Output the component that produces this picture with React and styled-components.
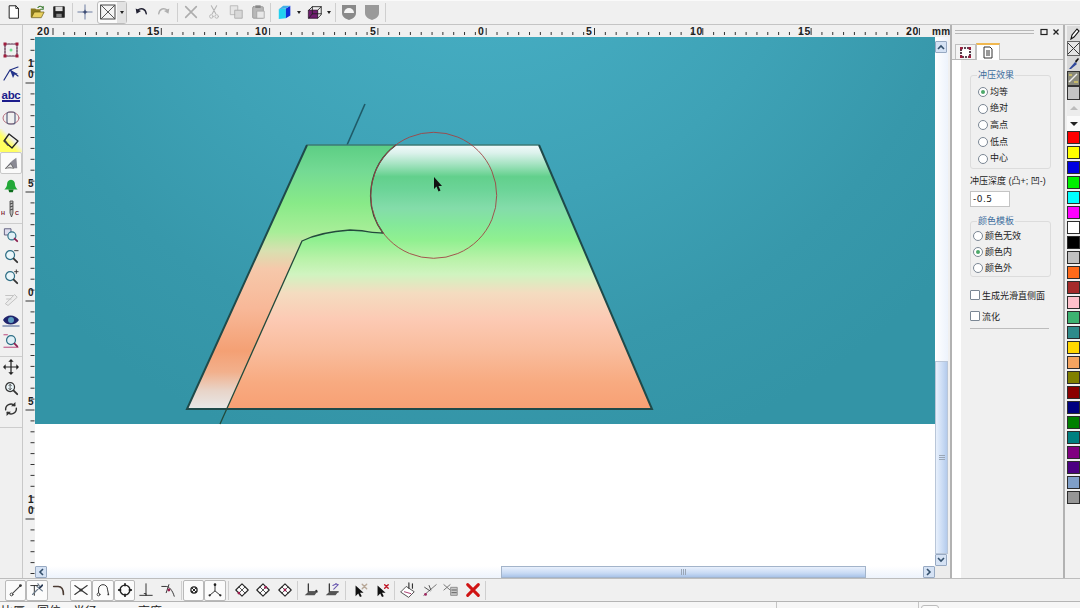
import React from 'react'
import styled, { createGlobalStyle } from 'styled-components'

const GlobalStyle = createGlobalStyle`
  html, body { margin: 0; padding: 0; background: #f0f0f0; }
  * { box-sizing: border-box; }
`

const CJK = `"Liberation Sans", "Noto Sans CJK SC", sans-serif`

const Frame = styled.div`
  display: flex;
  flex-direction: column;
  width: 1080px;
  height: 608px;
  overflow: hidden;
  background: #f0f0f0;
  font-family: ${CJK};
  color: #222;
`

const TopBar = styled.div`
  display: flex;
  align-items: center;
  height: 25px;
  padding: 0 0 1px 3px;
  border-top: 1px solid #fafafa;
  border-bottom: 1px solid #c4c4c4;
`

const BottomBar = styled.div`
  display: flex;
  align-items: center;
  height: 24px;
  padding-left: 5px;
  border-top: 1px solid #bdbdbd;
  border-bottom: 1px solid #b4b4b4;
`

const ToolBtn = styled.div`
  display: flex;
  flex: none;
  align-items: center;
  justify-content: center;
  width: ${({ $w }) => $w || 22}px;
  height: 21px;
  border-radius: 2px;
  ${({ $on }) => $on && `
    background: #fbfbfb;
    border: 1px solid #b9b9b9;
  `}
`

const Split = styled.div`
  flex: none;
  width: 1px;
  height: 19px;
  margin: 0 ${({ $m }) => $m ?? 2}px;
  background: #cfcfcf;
`

const Gap = styled.div`
  flex: none;
  width: ${({ $w }) => $w}px;
`

const DropBtn = styled.div`
  display: flex;
  flex: none;
  width: 30px;
  height: 23px;
  margin: 0 3px 0 1px;
  background: #fbfbfb;
  border: 1px solid #bcbcbc;
  border-radius: 3px;
`

const DropFace = styled.div`
  display: flex;
  flex: 1;
  align-items: center;
  justify-content: center;
`

const DropCaret = styled.div`
  display: flex;
  align-items: center;
  justify-content: center;
  width: 9px;
  background: #e2e2e2;
`

const Caret = styled.span`
  display: block;
  flex: none;
  width: 0;
  height: 0;
  border-left: 2.5px solid transparent;
  border-right: 2.5px solid transparent;
  border-top: 3px solid #222;
  margin-left: ${({ $m }) => $m || 0}px;
  margin-right: ${({ $r }) => $r || 0}px;
`

const Main = styled.div`
  display: flex;
  height: 553px;
`

const SideTools = styled.div`
  flex: none;
  width: 23px;
  padding-top: 13px;
  border-right: 1px solid #c8c8c8;
`

const SideGroup = styled.div`
  display: flex;
  flex-direction: column;
  width: 22px;
  padding-bottom: ${({ $pb }) => $pb || 0}px;
  border-bottom: 1px solid #cdcdcd;
`

const SideBtn = styled.div`
  display: flex;
  align-items: center;
  justify-content: center;
  height: ${({ $h }) => $h}px;
  ${({ $on }) => $on && `
    background: #fafafa;
    border: 1px solid #c8c8c8;
    border-radius: 2px;
  `}
  ${({ $hl }) => $hl && `
    background: linear-gradient(45deg, #ffff60 0 38%, transparent 58%);
  `}
`

const AbcMark = styled.span`
  font: bold 11.5px/10px "Liberation Sans", sans-serif;
  color: #1c1c8c;
  border-bottom: 2px solid #1c1c8c;
  letter-spacing: -0.3px;
`

const Workspace = styled.div`
  display: grid;
  flex: none;
  grid-template-columns: 12px 900px 13px 2px;
  grid-template-rows: 12px 529px 12px;
  width: 927px;
`

const RulerCorner = styled.div`
  background: #f0f0f0;
`

const TopRuler = styled.svg`
  grid-column: 2 / 5;
  display: block;
  width: 915px;
  height: 12px;
`

const SideRuler = styled.svg`
  display: block;
  width: 12px;
  height: 541px;
  grid-row: 2 / 4;
`

const Canvas = styled.svg`
  display: block;
  width: 900px;
  height: 529px;
  background: #fff;
`

const VTrack = styled.div`
  display: flex;
  flex-direction: column;
  background: linear-gradient(90deg, #ffffff, #edf3fc);
`

const VSpace = styled.div`
  flex: 1;
  display: flex;
  justify-content: flex-start;
  padding-top: 4px;
`

const VThumb = styled.div`
  display: flex;
  align-items: center;
  justify-content: center;
  height: 193px;
  background: linear-gradient(90deg, #e8f0fc, #c9dbf4 60%, #b4cbec);
  border: 1px solid #b9c6d8;
`

const Grip = styled.div`
  width: 6px;
  height: 6px;
  background: ${({ $v }) =>
    $v
      ? 'repeating-linear-gradient(180deg, #9aa6b6 0 1px, transparent 1px 2px)'
      : 'repeating-linear-gradient(90deg, #9aa6b6 0 1px, transparent 1px 2px)'};
`

const ArrowBtn = styled.div`
  display: flex;
  flex: none;
  align-items: center;
  justify-content: center;
  width: 12px;
  height: 12px;
  background: #d5e2f4;
  border: 1px solid #97a9c2;
  border-radius: 1px;
`

const HTrack = styled.div`
  display: flex;
  align-items: center;
  background: linear-gradient(180deg, #ffffff, #edf3fc);
`

const HSpace = styled.div`
  flex: 1;
  padding-left: 454px;
  padding-right: 57px;
`

const HThumb = styled.div`
  display: flex;
  align-items: center;
  justify-content: center;
  height: 12px;
  background: linear-gradient(180deg, #e8f0fc, #c9dbf4 60%, #a9c3e8);
  border: 1px solid #a3b4ca;
`

const ScrollCorner = styled.div`
  background: #ececec;
`

const Dock = styled.div`
  flex: none;
  display: flex;
  flex-direction: column;
  width: 115px;
  border-left: 2px solid #b2b2b2;
  border-right: 2px solid #b2b2b2;
`

const DockHead = styled.div`
  display: flex;
  align-items: center;
  gap: 3px;
  height: 18px;
  padding: 0 3px 4px 3px;
`

const DockGrip = styled.div`
  flex: 1;
  height: 4px;
  margin-right: 2px;
  border-top: 1px solid #b8b8b8;
  border-bottom: 1px solid #b8b8b8;
`

const DockBtn = styled.div`
  display: flex;
  align-items: center;
  justify-content: center;
  width: 9px;
  height: 9px;
`

const TabRow = styled.div`
  display: flex;
  align-items: flex-end;
  height: 17px;
  padding-left: 3px;
  border-bottom: 1px solid #b8b8b8;
`

const Tab = styled.div`
  display: flex;
  align-items: center;
  justify-content: center;
  width: ${({ $active }) => ($active ? 24 : 21)}px;
  height: ${({ $active }) => ($active ? 17 : 15)}px;
  margin-bottom: ${({ $active }) => ($active ? -1 : 0)}px;
  background: ${({ $active }) => ($active ? '#fff' : '#f4f4f4')};
  border: 1px solid #c0c0c0;
  border-bottom: none;
  border-top: ${({ $active }) => ($active ? '2px solid #f0b850' : '1px solid #c0c0c0')};
`

const DockBody = styled.div`
  display: flex;
  flex: 1;
`

const WhiteStrip = styled.div`
  width: 9px;
  background: #fff;
`

const Form = styled.div`
  flex: 1;
  padding: 15px 0 0 9px;
  background: #f0f0f0;
  font-size: 9px;
`

const Group = styled.div`
  position: relative;
  width: 81px;
  height: ${({ $h }) => $h}px;
  padding: ${({ $pt }) => $pt}px 0 0 ${({ $pl }) => $pl}px;
  margin-top: ${({ $mt }) => $mt || 0}px;
  border: 1px solid #dcdcdc;
  border-radius: 3px;
`

const Legend = styled.div`
  position: absolute;
  top: -6px;
  left: 6px;
  padding: 0 1px;
  background: #f0f0f0;
  color: #3c6c9c;
  line-height: 11px;
`

const RadioRow = styled.div`
  display: flex;
  align-items: center;
  gap: 2px;
  height: ${({ $h }) => $h}px;
  line-height: 11px;
`

const Radio = styled.span`
  display: flex;
  flex: none;
  align-items: center;
  justify-content: center;
  width: 10px;
  height: 10px;
  background: #fff;
  border: 1px solid #7b8794;
  border-radius: 50%;
  &::after {
    content: '';
    display: ${({ $on }) => ($on ? 'block' : 'none')};
    width: 4px;
    height: 4px;
    border-radius: 50%;
    background: #4da86a;
  }
`

const FieldLabel = styled.div`
  margin-top: 6px;
  line-height: 12px;
  white-space: nowrap;
`

const DepthInput = styled.div`
  width: 40px;
  height: 16px;
  margin-top: 4px;
  padding: 1px 0 0 2px;
  background: #fff;
  border: 1px solid #c4c4c4;
  font: 9px/12px "DejaVu Sans", sans-serif;
  letter-spacing: 0.5px;
`

const CheckRow = styled.div`
  display: flex;
  align-items: center;
  gap: 2px;
  height: 12px;
  margin-top: ${({ $mt }) => $mt}px;
  white-space: nowrap;
`

const Check = styled.span`
  flex: none;
  width: 10px;
  height: 10px;
  background: #fff;
  border: 1px solid #7b8794;
  border-radius: 1px;
`

const Rule = styled.div`
  width: 79px;
  height: 1px;
  margin-top: 6px;
  background: #bcbcbc;
`

const Palette = styled.div`
  flex: none;
  display: flex;
  flex-direction: column;
  align-items: flex-start;
  width: 15px;
  padding: 1px 0 0 2px;
`

const PalBtn = styled.div`
  display: flex;
  align-items: center;
  justify-content: center;
  width: 13px;
  height: ${({ $h }) => $h || 15}px;
  background: ${({ $bg }) => $bg || 'transparent'};
  border: ${({ $bd }) => ($bd ? `1px solid ${$bd}` : 'none')};
`

const Swatch = styled.div`
  flex: none;
  width: 13px;
  height: 13px;
  margin-bottom: 2px;
  background: ${({ $c }) => $c};
  border: 1px solid #2c2c2c;
`

const Status = styled.div`
  display: flex;
  flex: 1;
  overflow: hidden;
  padding-left: 1px;
  background: #f6f6f6;
  font-size: 12px;
  line-height: 14px;
`

const StatusCell = styled.span`
  flex: none;
  width: ${({ $w }) => $w}px;
  padding-top: 3px;
`

const StatusDivide = styled.span`
  flex: none;
  width: 1px;
  background: #c4c4c4;
`

const StatusBtn = styled.span`
  flex: none;
  width: 18px;
  height: 12px;
  margin: 3px 0 0 2px;
  border: 1px solid #bcbcbc;
  border-radius: 3px;
  background: #fbfbfb;
`

const Svg = ({ s = 16, v = 18, children }) => (
  <svg width={s} height={s} viewBox={`0 0 ${v} ${v}`} fill="none" strokeLinecap="round" strokeLinejoin="round">
    {children}
  </svg>
)

const Cross = ({ x, y, r = 2, c = '#222', w = 1 }) => (
  <path d={`M${x - r} ${y - r}l${r * 2} ${r * 2}M${x + r} ${y - r}l${-r * 2} ${r * 2}`} stroke={c} strokeWidth={w} />
)

const Lens = ({ c = '#2e6f86', extra }) => (
  <Svg>
    <circle cx="8" cy="8" r="5" stroke={c} strokeWidth="1.4" fill="#eaf6fa" />
    <path d="M12 12l4 4" stroke="#333" strokeWidth="2" />
    {extra}
  </Svg>
)

const Diamond = ({ dot }) => (
  <Svg>
    <path d="M9 2l7 7-7 7-7-7z" stroke="#222" strokeWidth="1.2" fill="#fff" />
    <path d="M5.500 5.500l7 7M12.500 5.500l-7 7" stroke="#444" strokeWidth="1" />
    <circle cx={dot[0]} cy={dot[1]} r="1.6" fill="#9c2050" />
  </Svg>
)

const Plate = ({ tint }) => (
  <Svg>
    <path d="M6 2v9l10 0" stroke="#333" strokeWidth="1.4" />
    <path d="M2 15l4-4h10l-3 4z" fill="#555" />
    {tint && <path d="M10 4l4-2M11 8l5-5M13 2l3 1" stroke={tint} strokeWidth="1.2" />}
    {!tint && <circle cx="15" cy="10" r="1.2" fill="#333" />}
  </Svg>
)

const ArrowMark = ({ c, size = 2.5 }) => (
  <Svg>
    <path d="M4 4v12l3-3 2 4 2-1-2-4h4z" fill="#111" />
    <Cross x={14} y={5} r={size} c={c} w={1.6} />
  </Svg>
)

const topIcons = {
  file: (
    <Svg>
      <path d="M4 2h7l3 3v11H4z" fill="#fff" stroke="#222" strokeWidth="1.1" />
      <path d="M11 2v3h3" stroke="#222" />
    </Svg>
  ),
  open: (
    <Svg>
      <path d="M2 5h5l1 1h5v9H2z" fill="#8a7a20" />
      <path d="M3 15l3-6h11l-3 6z" fill="#e8d060" stroke="#6a5a10" strokeWidth=".8" />
      <path d="M10 4c2-2 4-2 5 0l1-1v3h-3" stroke="#3a7a30" strokeWidth="1.2" />
    </Svg>
  ),
  save: (
    <Svg>
      <rect x="2.500" y="2.500" width="13" height="13" rx="1" fill="#222" />
      <rect x="5" y="3" width="8" height="5" fill="#ddd" />
      <rect x="6" y="11" width="6" height="4" fill="#888" />
    </Svg>
  ),
  cross: (
    <Svg>
      <path d="M9 1v16M1 9h16" stroke="#5a6c96" strokeWidth="1" />
      <path d="M7 9h4M9 7v4" stroke="#20305a" strokeWidth="1" />
    </Svg>
  ),
  boxX: (
    <Svg s={18}>
      <rect x="2" y="2" width="14" height="14" stroke="#444" strokeWidth="1" fill="#f4f4f4" />
      <path d="M2 2l14 14M16 2L2 16" stroke="#555" strokeWidth="1" />
    </Svg>
  ),
  undo: (
    <Svg>
      <path d="M5 7c4-3 9-2 10 4" stroke="#223" strokeWidth="1.5" />
      <path d="M3 5l1 6 5-3z" fill="#223" />
    </Svg>
  ),
  redo: (
    <Svg>
      <path d="M13 7c-4-3-9-2-10 4" stroke="#b0b0b0" strokeWidth="1.5" />
      <path d="M15 5l-1 6-5-3z" fill="#b0b0b0" />
    </Svg>
  ),
  del: (
    <Svg>
      <path d="M3 3l12 12M15 3L3 15" stroke="#adadad" strokeWidth="1.8" />
    </Svg>
  ),
  cut: (
    <Svg>
      <path d="M6 2l5 9M12 2l-5 9" stroke="#b4b4b4" strokeWidth="1.2" />
      <circle cx="6" cy="14" r="2" stroke="#b4b4b4" />
      <circle cx="12" cy="14" r="2" stroke="#b4b4b4" />
    </Svg>
  ),
  copy: (
    <Svg>
      <rect x="3" y="2" width="8" height="10" fill="#e6e6e6" stroke="#b4b4b4" />
      <rect x="8" y="7" width="8" height="9" fill="#d8d8d8" stroke="#aaa" />
    </Svg>
  ),
  paste: (
    <Svg>
      <rect x="3" y="3" width="12" height="13" rx="1" fill="#b8b8b8" stroke="#999" />
      <rect x="6" y="1.500" width="6" height="3" fill="#888" />
      <rect x="8" y="8" width="8" height="8" fill="#e8e8e8" stroke="#aaa" />
    </Svg>
  ),
  cube: (
    <Svg>
      <path d="M2 6l8-1v11l-8 1z" fill="#22d0f0" />
      <path d="M10 5l5-3v11l-5 3z" fill="#1030d8" />
      <path d="M2 6l5-4h8l-5 3z" fill="#40b0e8" />
    </Svg>
  ),
  wire: (
    <Svg>
      <path d="M2 7h10v9H2z" fill="#701c70" stroke="#301030" />
      <path d="M2 7l4-4h10v9l-4 4M12 7l4-4M6 3v8M2 16l4-5h10" stroke="#222" strokeWidth="1" />
    </Svg>
  ),
  shieldA: (
    <Svg s={18}>
      <path d="M2 2h14v8c0 4-4 6-7 7-3-1-7-3-7-7z" fill="#8a8a8a" />
      <path d="M4 10a5 5 0 0 1 10 0z" fill="#f4f4f4" />
    </Svg>
  ),
  shieldB: (
    <Svg s={18}>
      <path d="M2 2h14v8c0 4-4 6-7 7-3-1-7-3-7-7z" fill="#9a9a9a" />
    </Svg>
  ),
}

const sideA = [
  {
    h: 24,
    el: (
      <Svg s={18}>
        <rect x="3" y="3" width="12" height="12" stroke="#502040" strokeWidth="1.2" strokeDasharray="2 1" />
        <path d="M1.500 1.500h3v3h-3zM13.500 1.500h3v3h-3zM1.500 13.500h3v3h-3zM13.500 13.500h3v3h-3z" fill="#a01c3c" />
        <circle cx="9" cy="9" r="1.5" fill="#70e090" />
      </Svg>
    ),
  },
  {
    h: 22,
    el: (
      <Svg s={18}>
        <path d="M2 16L8 6l8-3M8 6l8 6" stroke="#1c2c80" strokeWidth="1.2" />
        <path d="M8 6l3 8 2-4 3 0z" fill="#24348c" />
      </Svg>
    ),
  },
  { h: 23, el: <AbcMark>abc</AbcMark> },
  {
    h: 22,
    el: (
      <Svg s={18}>
        <ellipse cx="9" cy="9" rx="8" ry="6" stroke="#b87080" strokeWidth="1" />
        <rect x="5" y="3" width="8" height="12" rx="2" stroke="#5c6480" strokeWidth="1.2" />
      </Svg>
    ),
  },
  {
    h: 23,
    hl: true,
    el: (
      <Svg s={18}>
        <path d="M7 2l9 7-6 7-8-7z" stroke="#222" strokeWidth="1.3" />
        <path d="M3 9l3 4" stroke="#444" strokeWidth="2" />
      </Svg>
    ),
  },
  {
    h: 22,
    on: true,
    el: (
      <Svg>
        <path d="M3 15c3-5 7-9 12-12l1 12z" fill="#8a8a94" />
        <path d="M3 15c3-1 6-1 9 0l-3-5z" fill="#e8e8e8" stroke="#555" strokeWidth=".8" />
      </Svg>
    ),
  },
  {
    h: 23,
    el: (
      <Svg s={16}>
        <path d="M9 2c3 0 4.500 2.500 4.500 5.500 0 2 1.500 3.500 3 5.500h-15c1.500-2 3-3.500 3-5.500C4.500 4.500 6 2 9 2z" fill="#22a838" />
        <path d="M6 13h6l-1 3H7z" fill="#0c6c1c" />
      </Svg>
    ),
  },
  {
    h: 23,
    el: (
      <svg width="20" height="20" viewBox="0 0 20 20">
        <path d="M9 2h3v12l-1.500 4L9 14z" fill="#b8b8b8" stroke="#444" strokeWidth=".8" />
        <path d="M9 5l3-1M9 8l3-1M9 11l3-1" stroke="#333" strokeWidth=".8" />
        <text x="0" y="16" fontSize="5.500" fontWeight="700" fill="#7c2030" fontFamily="Liberation Sans">H</text>
        <text x="14" y="16" fontSize="5.500" fontWeight="700" fill="#7c2030" fontFamily="Liberation Sans">C</text>
      </svg>
    ),
  },
]

const sideB = [
  {
    el: (
      <Svg>
        <rect x="2" y="2" width="7" height="7" fill="#dde" stroke="#557" />
        <circle cx="10" cy="10" r="4.500" fill="#dff0f6" stroke="#2e6f86" strokeWidth="1.3" />
        <path d="M13 13l3 3" stroke="#8c2050" strokeWidth="2" />
      </Svg>
    ),
  },
  { el: <Lens extra={<path d="M13 3h4" stroke="#333" />} /> },
  { el: <Lens extra={<path d="M15 1v4M13 3h4" stroke="#333" />} /> },
  {
    el: (
      <Svg>
        <path d="M3 14l10-10 3 3-10 9z" fill="#ececec" stroke="#bcbcbc" />
        <path d="M3 5h8M4 9h5" stroke="#c4c4c4" strokeWidth="1.2" />
      </Svg>
    ),
  },
  {
    el: (
      <Svg s={18}>
        <path d="M1 9c3-6 12-6 16 0-4 6-13 6-16 0z" fill="#20246c" />
        <circle cx="9" cy="9" r="3" fill="#5c9cc0" />
        <path d="M1 15h16" stroke="#7c8cb0" strokeWidth="1.5" />
      </Svg>
    ),
  },
  {
    el: (
      <Svg>
        <path d="M1 16h16M1 2h4" stroke="#b0306c" strokeWidth="1" />
        <circle cx="9" cy="8" r="5" stroke="#2e6f86" strokeWidth="1.4" fill="#dff0f6" />
        <path d="M13 12l3 3" stroke="#8c2050" strokeWidth="2" />
      </Svg>
    ),
  },
]

const sideC = [
  {
    el: (
      <Svg>
        <path d="M9 2v14M2 9h14" stroke="#222" strokeWidth="1.4" />
        <path d="M9 0l3 3H6zM9 18l3-3H6zM0 9l3-3v6zM18 9l-3-3v6z" fill="#222" />
      </Svg>
    ),
  },
  { el: <Lens c="#333" extra={<path d="M8 5v6M6.500 6.500L8 5l1.500 1.500M6.500 9.500L8 11l1.500-1.500" stroke="#333" strokeWidth=".8" />} /> },
  {
    el: (
      <Svg>
        <path d="M3 10a6 6 0 0 1 10-5" stroke="#333" strokeWidth="1.6" />
        <path d="M15 8a6 6 0 0 1-10 5" stroke="#333" strokeWidth="1.6" />
        <path d="M14 1v5H9zM4 17v-5h5z" fill="#333" />
      </Svg>
    ),
  },
]

const bottomItems = [
  {
    w: 21,
    on: true,
    el: (
      <Svg>
        <path d="M4 14L14 4" stroke="#444" strokeWidth="1.2" />
        <circle cx="4" cy="14" r="1.6" stroke="#333" fill="#fff" />
        <circle cx="14" cy="4" r="1.6" fill="#333" />
      </Svg>
    ),
  },
  {
    w: 22,
    on: true,
    el: (
      <Svg>
        <path d="M2 4h8M6 4v11" stroke="#333" strokeWidth="1.1" />
        <path d="M4 14L15 3M9 5l6 5M10 2l2 3" stroke="#6c7c8c" strokeWidth="1.4" />
        <path d="M12 7l3-3" stroke="#20304c" strokeWidth="1.6" />
      </Svg>
    ),
  },
  {
    w: 21,
    el: (
      <Svg>
        <path d="M3 5h5c4 0 6 3 6 9" stroke="#4c3c34" strokeWidth="1.8" />
      </Svg>
    ),
  },
  { gap: 1 },
  {
    w: 22,
    on: true,
    el: (
      <Svg>
        <path d="M2 4l14 10M2 14L16 4" stroke="#333" strokeWidth="1.2" />
        <circle cx="9" cy="9" r="1.8" fill="#333" />
      </Svg>
    ),
  },
  {
    w: 22,
    on: true,
    el: (
      <Svg>
        <path d="M4 13V8a5 5 0 0 1 10 0l1 5" stroke="#333" strokeWidth="1.1" />
        <circle cx="4" cy="14" r="1.6" stroke="#333" fill="#fff" />
        <circle cx="15" cy="14" r="1" fill="#333" />
      </Svg>
    ),
  },
  {
    w: 21,
    on: true,
    el: (
      <Svg>
        <circle cx="9" cy="9" r="5.500" stroke="#222" strokeWidth="1.6" />
        <path d="M9 2v2M9 14v2M2 9h2M14 9h2" stroke="#222" strokeWidth="2" />
      </Svg>
    ),
  },
  {
    w: 21,
    el: (
      <Svg>
        <path d="M9 2v13M2 15h14" stroke="#333" strokeWidth="1.1" />
        <path d="M7 13h2v2" stroke="#333" strokeWidth="1" />
      </Svg>
    ),
  },
  {
    w: 24,
    el: (
      <Svg>
        <path d="M2 5h5c3 0 7 4 9 11" stroke="#333" strokeWidth="1.1" />
        <path d="M10 3L7 12" stroke="#333" strokeWidth="1.1" />
        <circle cx="10" cy="9" r="1.6" fill="#9c2050" />
      </Svg>
    ),
  },
  { sep: 1 },
  {
    w: 21,
    on: true,
    el: (
      <Svg>
        <circle cx="9" cy="9" r="3.500" stroke="#222" strokeWidth="1.4" />
        <Cross x={9} y={9} r={2} w={1.1} />
      </Svg>
    ),
  },
  {
    w: 22,
    on: true,
    el: (
      <Svg>
        <path d="M9 3v7L3 15M9 10l6 5" stroke="#333" strokeWidth="1.1" />
        <circle cx="9" cy="3" r="1.5" fill="#222" />
        <circle cx="3" cy="15" r="1.3" fill="#222" />
        <circle cx="15" cy="15" r="1.3" fill="#222" />
      </Svg>
    ),
  },
  { sep: 2 },
  { w: 21, el: <Diamond dot={[5.5, 12.5]} /> },
  { w: 22, el: <Diamond dot={[12, 6]} /> },
  { w: 22, el: <Diamond dot={[9, 9]} /> },
  { sep: 1 },
  { gap: 1 },
  { w: 22, el: <Plate /> },
  { w: 20, el: <Plate tint="#6a58b0" /> },
  { sep: 3 },
  { w: 22, el: <ArrowMark c="#b8a898" /> },
  { w: 21, el: <ArrowMark c="#c01828" size={2} /> },
  { sep: 2 },
  {
    w: 22,
    el: (
      <Svg>
        <path d="M1 11l6-6 9 6-6 6z" stroke="#444" fill="#fff" />
        <path d="M5 11l7 2" stroke="#a02860" />
        <path d="M10 1v6M14 2v5" stroke="#333" strokeWidth="1.3" />
      </Svg>
    ),
  },
  {
    w: 21,
    el: (
      <Svg>
        <path d="M2 15l14-12" stroke="#777" strokeWidth="1.1" />
        <path d="M3 6l6 4M8 4l2 5" stroke="#444" />
        <circle cx="4" cy="14" r="1.6" fill="#a02860" />
      </Svg>
    ),
  },
  {
    w: 22,
    el: (
      <Svg>
        <path d="M1 3l7 6M8 3L1 9" stroke="#777" strokeWidth="1.1" />
        <rect x="9" y="6" width="7" height="9" fill="#c8c8c8" stroke="#888" />
        <path d="M10 9h5M10 12h5" stroke="#555" />
      </Svg>
    ),
  },
  {
    w: 22,
    el: (
      <Svg>
        <path d="M3 3l12 12M15 3L3 15" stroke="#d01414" strokeWidth="3.4" />
      </Svg>
    ),
  },
  { sep: 1 },
]

const swatches = [
  '#ff0000', '#ffff00', '#0000e0', '#00f000', '#00ffff', '#ff00ff', '#ffffff', '#000000', '#c0c0c0',
  '#ff6a1a', '#a52a2a', '#ffc0cb', '#3cb371', '#2e8b8b', '#ffd700', '#f4a460', '#808000', '#8b0000',
  '#000080', '#008000', '#008080', '#800080', '#4b0082', '#7f9fc8', '#969696',
]

const topLabels = [
  [36, '20'], [146, '15'], [254, '10'], [369, '5'], [477, '0'],
  [585, '5'], [689, '10'], [797, '15'], [905, '20'],
]

const leftMajors = [
  [83, ['1', '0']], [192, ['5']], [301, ['0']], [410, ['5']], [519, ['1', '0']],
]

const RulerTop = () => {
  const ticks = []
  for (let i = 0; i < 81; i++) {
    const x = 53 - 35 + i * 10.83
    ticks.push(<path key={i} d={`M${x} ${i % 10 === 0 ? 3 : 7}V10`} stroke="#333" strokeWidth="1" />)
  }
  return (
    <TopRuler viewBox="0 0 915 12">
      {ticks}
      {topLabels.map(([x, t]) => (
        <text key={x} x={x - 35 + 1} y="10" fontSize="10.500" fontWeight="700" letterSpacing="0.6" fill="#222" fontFamily="Liberation Sans">
          {t}
        </text>
      ))}
      <text x="897" y="10" fontSize="10" fontWeight="700" letterSpacing="0.4" fill="#222" fontFamily="Liberation Sans">mm</text>
    </TopRuler>
  )
}

const RulerLeft = () => {
  const ticks = []
  for (let i = 0; i < 50; i++) {
    const y = 83 - 37 - 10.9 * 4 + i * 10.9
    ticks.push(<path key={i} d={`M${(i - 4) % 10 === 0 ? 2 : 7}.5 ${y}H11.5`} stroke="#333" strokeWidth="1" />)
  }
  return (
    <SideRuler viewBox="0 0 12 541">
      {ticks}
      {leftMajors.map(([y, chars]) =>
        chars.map((c, i) => (
          <text key={`${y}${i}`} x="5" y={y - 37 - 5 - (chars.length - 1 - i) * 11} fontSize="10" fontWeight="700" fill="#222" fontFamily="Liberation Sans">
            {c}
          </text>
        )),
      )}
    </SideRuler>
  )
}

const mainStops = [
  [0, '#f2fafa'], [0.03, '#dcf2ec'], [0.07, '#a8e4c4'], [0.12, '#62d08c'], [0.17, '#6cd498'], [0.24, '#84dcaa'],
  [0.3, '#84e89a'], [0.36, '#90f090'], [0.43, '#b8f2a8'], [0.49, '#d0f4c0'], [0.56, '#f4dcc0'],
  [0.66, '#fccab4'], [0.78, '#f9bc9c'], [0.9, '#f8aa80'], [1, '#f8a074'],
]

const leftStops = [
  [0, '#5cce84'], [0.1, '#74da94'], [0.22, '#88ea88'], [0.33, '#a8ee98'], [0.4, '#d8e0b0'], [0.47, '#f6c8aa'],
  [0.62, '#f8b898'], [0.78, '#f4a074'], [0.86, '#f2b08c'], [0.93, '#e8d4c8'], [1, '#e8e8e8'],
]

// left part of the sheet, bounded by the punch circle and the offset curve
const CUT_EDGE = 'A63 63 0 0 0 383 233C372 233 362 230 350 230C335 231 318 233 302 241'

const Drawing = () => (
  <Canvas viewBox="35 37 900 529">
    <defs>
      <radialGradient id="sea" gradientUnits="userSpaceOnUse" cx="480" cy="-140" r="620">
        <stop offset="0.28" stopColor="#44abc0" />
        <stop offset="0.55" stopColor="#3ea2b6" />
        <stop offset="0.8" stopColor="#3798ab" />
        <stop offset="1" stopColor="#3394a6" />
      </radialGradient>
      <linearGradient id="mainFill" gradientUnits="userSpaceOnUse" x1="0" y1="145" x2="0" y2="409">
        {mainStops.map(([o, c]) => <stop key={o} offset={o} stopColor={c} />)}
      </linearGradient>
      <linearGradient id="leftFill" gradientUnits="userSpaceOnUse" x1="0" y1="145" x2="0" y2="409">
        {leftStops.map(([o, c]) => <stop key={o} offset={o} stopColor={c} />)}
      </linearGradient>
    </defs>
    <rect x="35" y="37" width="900" height="387" fill="url(#sea)" />
    <path d="M347 145L365 104" stroke="#1f5a68" strokeWidth="1.6" />
    <path d="M307 145H539L652 409H187z" fill="url(#mainFill)" />
    <path d={`M307 145H396${CUT_EDGE}L226.700 409H187z`} fill="url(#leftFill)" />
    <path d="M307 145H539" stroke="#3c7a74" strokeWidth="1.4" />
    <path d="M539 145L652 409H187L307 145" stroke="#1f4a4a" strokeWidth="2" fill="none" />
    <path d={`M396 145${CUT_EDGE}L220 424`} stroke="#234a3c" strokeWidth="1.3" fill="none" />
    <circle cx="433.700" cy="195.300" r="63" stroke="#a04444" strokeWidth="0.9" fill="none" />
    <path d="M434 177v12l2.500-2.500 2 5 2-1-2-4.500h3.500z" fill="#111" />
  </Canvas>
)

export default function App() {
  return (
    <Frame>
      <GlobalStyle />
      <TopBar>
        <ToolBtn>{topIcons.file}</ToolBtn>
        <ToolBtn $w={23}>{topIcons.open}</ToolBtn>
        <ToolBtn>{topIcons.save}</ToolBtn>
        <Split $m={1.5} />
        <ToolBtn>{topIcons.cross}</ToolBtn>
        <DropBtn>
          <DropFace>{topIcons.boxX}</DropFace>
          <DropCaret><Caret /></DropCaret>
        </DropBtn>
        <ToolBtn>{topIcons.undo}</ToolBtn>
        <ToolBtn $w={23}>{topIcons.redo}</ToolBtn>
        <Split $m={2} />
        <ToolBtn>{topIcons.del}</ToolBtn>
        <ToolBtn $w={23}>{topIcons.cut}</ToolBtn>
        <ToolBtn>{topIcons.copy}</ToolBtn>
        <ToolBtn>{topIcons.paste}</ToolBtn>
        <Split $m={1} />
        <Gap $w={3} />
        <ToolBtn $w={20}>{topIcons.cube}</ToolBtn>
        <Caret $m={2} $r={3} />
        <ToolBtn $w={22}>{topIcons.wire}</ToolBtn>
        <Caret $m={1} $r={2} />
        <Split $m={2} />
        <ToolBtn $w={22}>{topIcons.shieldA}</ToolBtn>
        <ToolBtn $w={24}>{topIcons.shieldB}</ToolBtn>
        <Split $m={1} />
      </TopBar>

      <Main>
        <SideTools>
          <SideGroup $pb={3}>
            {sideA.map((b, i) => (
              <SideBtn key={i} $h={b.h} $on={b.on} $hl={b.hl}>{b.el}</SideBtn>
            ))}
          </SideGroup>
          <SideGroup $pb={4}>
            {sideB.map((b, i) => (
              <SideBtn key={i} $h={21.3}>{b.el}</SideBtn>
            ))}
          </SideGroup>
          <SideGroup $pb={7}>
            {sideC.map((b, i) => (
              <SideBtn key={i} $h={21}>{b.el}</SideBtn>
            ))}
          </SideGroup>
        </SideTools>

        <Workspace>
          <RulerCorner />
          <RulerTop />
          <RulerLeft />
          <Drawing />
          <VTrack>
            <VSpace>
              <ArrowBtn>
                <svg width="8" height="8" viewBox="0 0 8 8"><path d="M1 6l3-3 3 3" stroke="#34506c" strokeWidth="1.6" fill="none" /></svg>
              </ArrowBtn>
            </VSpace>
            <VThumb><Grip $v /></VThumb>
            <ArrowBtn>
              <svg width="8" height="8" viewBox="0 0 8 8"><path d="M1 2l3 3 3-3" stroke="#34506c" strokeWidth="1.6" fill="none" /></svg>
            </ArrowBtn>
          </VTrack>
          <div />
          <HTrack>
            <ArrowBtn>
              <svg width="8" height="8" viewBox="0 0 8 8"><path d="M6 1L3 4l3 3" stroke="#34506c" strokeWidth="1.6" fill="none" /></svg>
            </ArrowBtn>
            <HSpace>
              <HThumb><Grip /></HThumb>
            </HSpace>
            <ArrowBtn>
              <svg width="8" height="8" viewBox="0 0 8 8"><path d="M2 1l3 3-3 3" stroke="#34506c" strokeWidth="1.6" fill="none" /></svg>
            </ArrowBtn>
          </HTrack>
          <ScrollCorner />
          <ScrollCorner />
        </Workspace>

        <Dock>
          <DockHead>
            <DockGrip />
            <DockBtn>
              <svg width="8" height="8" viewBox="0 0 8 8"><rect x="1" y="1.500" width="6" height="5" stroke="#222" strokeWidth="1.2" fill="none" /></svg>
            </DockBtn>
            <DockBtn>
              <svg width="8" height="8" viewBox="0 0 8 8"><path d="M1.500 1.500l5 5M6.500 1.500l-5 5" stroke="#222" strokeWidth="1.3" /></svg>
            </DockBtn>
          </DockHead>
          <TabRow>
            <Tab>
              <svg width="13" height="13" viewBox="0 0 13 13">
                <rect x="2" y="2" width="9" height="9" stroke="#2a1020" strokeWidth="1.6" fill="#fff" strokeDasharray="2 1" />
                <path d="M1 1h2.500v2.500H1zM9.500 1H12v2.500H9.500zM1 9.500h2.500V12H1zM9.500 9.500H12V12H9.500z" fill="#a01c3c" />
              </svg>
            </Tab>
            <Tab $active>
              <svg width="12" height="13" viewBox="0 0 12 13">
                <path d="M2 1h6l2 2v9H2z" stroke="#333" fill="#fff" />
                <path d="M4 5h4M4 7h4M4 9h4" stroke="#333" />
              </svg>
            </Tab>
          </TabRow>
          <DockBody>
            <WhiteStrip />
            <Form>
              <Group $h={94} $pl={7} $pt={8}>
                <Legend>冲压效果</Legend>
                {['均等', '绝对', '高点', '低点', '中心'].map((t, i) => (
                  <RadioRow key={t} $h={16.6}>
                    <Radio $on={i === 0} />
                    {t}
                  </RadioRow>
                ))}
              </Group>
              <FieldLabel>冲压深度 (凸+; 凹-)</FieldLabel>
              <DepthInput>-0.5</DepthInput>
              <Group $h={56} $pl={2} $pt={6} $mt={14}>
                <Legend>颜色模板</Legend>
                {['颜色无效', '颜色内', '颜色外'].map((t, i) => (
                  <RadioRow key={t} $h={16}>
                    <Radio $on={i === 1} />
                    {t}
                  </RadioRow>
                ))}
              </Group>
              <CheckRow $mt={12}><Check />生成光滑直侧面</CheckRow>
              <CheckRow $mt={9}><Check />流化</CheckRow>
              <Rule />
            </Form>
          </DockBody>
        </Dock>

        <Palette>
          <PalBtn $bg="#dcdcdc">
            <svg width="12" height="13" viewBox="0 0 12 13"><path d="M3 12l1-4 5-6 2 2-5 6z" stroke="#111" strokeWidth="1.1" fill="#fff" /></svg>
          </PalBtn>
          <PalBtn $bg="#e4e4e4" $bd="#666">
            <svg width="11" height="13" viewBox="0 0 11 13"><path d="M0 1l11 11M11 1L0 12" stroke="#333" /></svg>
          </PalBtn>
          <PalBtn $bg="#d8d8d8">
            <svg width="12" height="13" viewBox="0 0 12 13"><path d="M1 12l6-7 2 2-6 5z" fill="#30489c" /><path d="M7 4l3-3 1 1-3 4z" fill="#111" /></svg>
          </PalBtn>
          <PalBtn $bg="#8a8a7c" $bd="#333">
            <svg width="11" height="13" viewBox="0 0 11 13"><path d="M1 10l8-8" stroke="#eee" strokeWidth="1.4" /><path d="M1 3h3M6 10h4" stroke="#d8c860" strokeWidth="1.6" /></svg>
          </PalBtn>
          <PalBtn $bg="#c4c4c4" $bd="#333" $h={14} />
          <PalBtn $bg="#ececec" $h={16}>
            <svg width="8" height="6" viewBox="0 0 8 6"><path d="M0 5l4-4 4 4z" fill="#bcbcbc" /></svg>
          </PalBtn>
          <PalBtn $bg="#fafafa" $h={15}>
            <svg width="8" height="6" viewBox="0 0 8 6"><path d="M0 1l4 4 4-4z" fill="#222" /></svg>
          </PalBtn>
          {swatches.map((c) => (
            <Swatch key={c} $c={c} />
          ))}
        </Palette>
      </Main>

      <BottomBar>
        {bottomItems.map((b, i) => {
          if (b.sep) return <Split key={i} $m={b.sep} />
          if (b.gap) return <Gap key={i} $w={b.gap} />
          return <ToolBtn key={i} $w={b.w} $on={b.on}>{b.el}</ToolBtn>
        })}
      </BottomBar>

      <Status>
        <StatusCell $w={36}>比厚</StatusCell>
        <StatusCell $w={36}>圆位</StatusCell>
        <StatusCell $w={65}>半径</StatusCell>
        <StatusCell $w={638}>高度</StatusCell>
        <StatusDivide />
        <StatusCell $w={141} />
        <StatusDivide />
        <StatusBtn />
      </Status>
    </Frame>
  )
}
